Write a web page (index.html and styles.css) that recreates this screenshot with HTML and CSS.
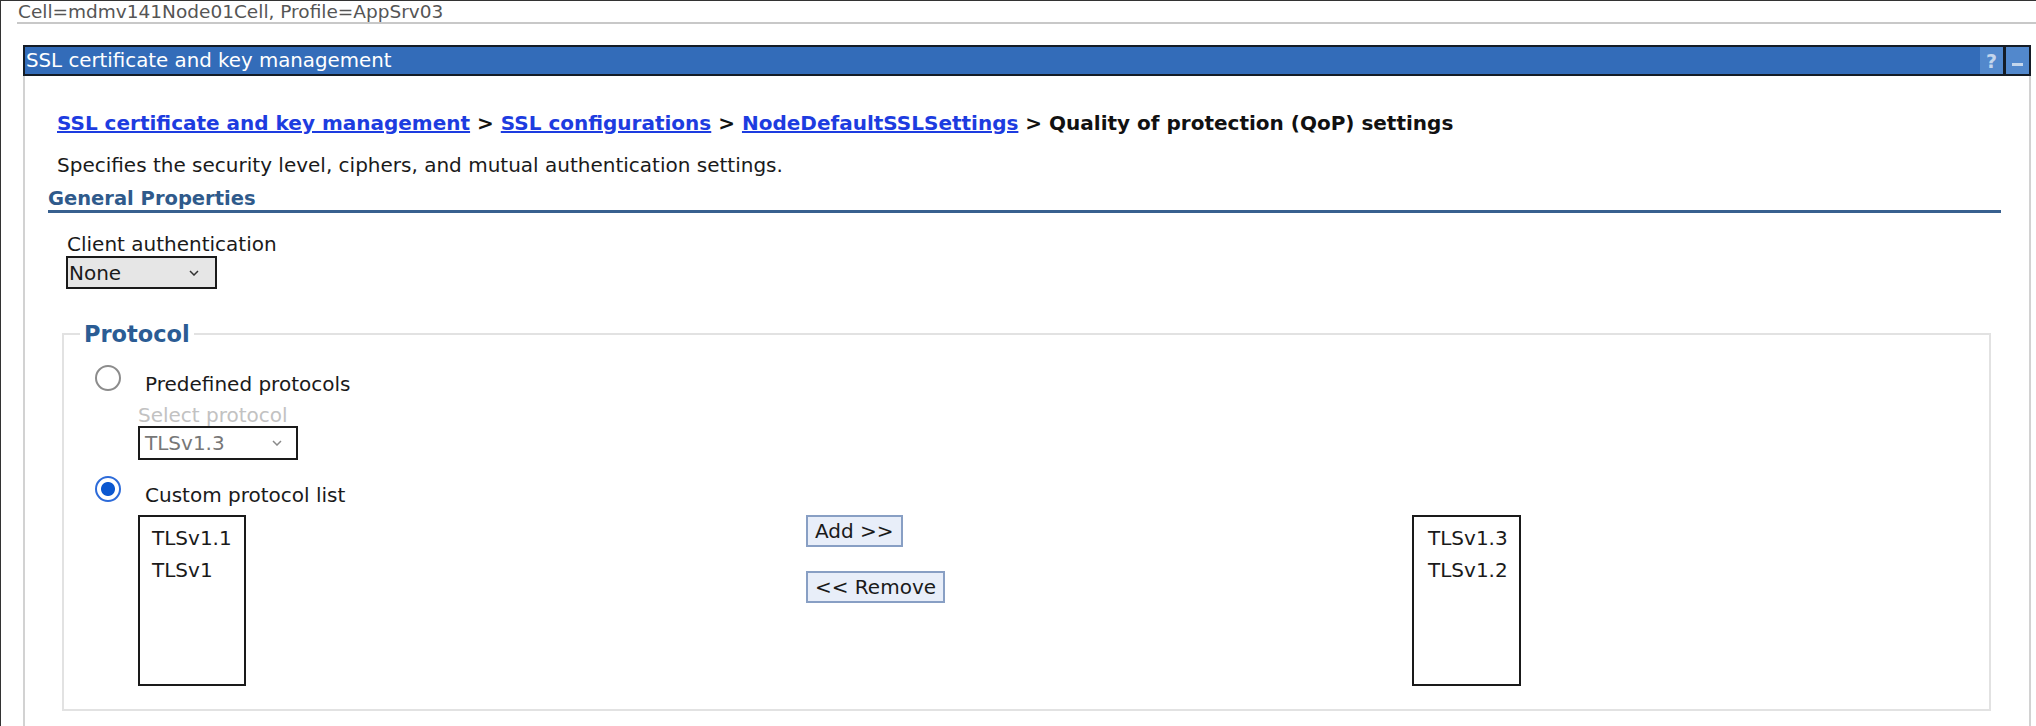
FILE: index.html
```html
<!DOCTYPE html>
<html lang="en">
<head>
    <meta charset="UTF-8">
    <title>Quality of protection (QoP) settings</title>
    <link rel="stylesheet" href="styles.css">
</head>
<body>
    <div class="frame">
        <div class="context">Cell=mdmv141Node01Cell, Profile=AppSrv03</div>

        <div class="portlet">
            <div class="portlet-title">
                <span class="portlet-name">SSL certificate and key management</span>
                <span class="tools">
                    <span class="tool">?</span>
                    <span class="tool tool-min"><span class="min-bar"></span></span>
                </span>
            </div>

            <div class="portlet-body">
                <h1 class="crumbs">
                    <a href="#">SSL certificate and key management</a> &gt;
                    <a href="#">SSL configurations</a> &gt;
                    <a href="#">NodeDefaultSSLSettings</a> &gt;
                    Quality of protection (QoP) settings
                </h1>
                <p class="desc">Specifies the security level, ciphers, and mutual authentication settings.</p>

                <h2 class="section">General Properties</h2>

                <div class="field">
                    <label class="field-label">Client authentication</label>
                    <div class="select select-auth">
                        <span>None</span>
                        <svg class="chev" width="10" height="6" viewBox="0 0 10 6"><path d="M1 1 L5 5 L9 1" fill="none" stroke="#333" stroke-width="1.5"/></svg>
                    </div>
                </div>

                <fieldset class="protocol">
                    <legend>Protocol</legend>

                    <div class="radio-row">
                        <span class="radio"></span>
                        <span class="radio-label">Predefined protocols</span>
                    </div>
                    <div class="sub">
                        <div class="sub-label">Select protocol</div>
                        <div class="select select-proto">
                            <span>TLSv1.3</span>
                            <svg class="chev" width="10" height="6" viewBox="0 0 10 6"><path d="M1 1 L5 5 L9 1" fill="none" stroke="#8a8a8a" stroke-width="1.5"/></svg>
                        </div>
                    </div>

                    <div class="radio-row radio-row-2">
                        <span class="radio checked"></span>
                        <span class="radio-label">Custom protocol list</span>
                    </div>

                    <div class="lists">
                        <div class="listbox">
                            <div class="option">TLSv1.1</div>
                            <div class="option">TLSv1</div>
                        </div>
                        <div class="movers">
                            <button class="btn">Add &gt;&gt;</button>
                            <button class="btn">&lt;&lt; Remove</button>
                        </div>
                        <div class="listbox listbox-right">
                            <div class="option">TLSv1.3</div>
                            <div class="option">TLSv1.2</div>
                        </div>
                    </div>
                </fieldset>
            </div>
        </div>
    </div>
</body>
</html>
```

FILE: styles.css
```css
* {
    box-sizing: border-box;
    margin: 0;
    padding: 0;
}

html, body {
    height: 100%;
}

body {
    font-family: "DejaVu Sans", Verdana, sans-serif;
    font-size: 20px;
    color: #1a1a1a;
    background: #ffffff;
    overflow: hidden;
}

.frame {
    height: 100%;
    display: flex;
    flex-direction: column;
    border-left: 1px solid #333;
    border-top: 1px solid #333;
}

.context {
    margin-left: 16px;
    height: 23px;
    padding: 1px 0 0 1px;
    line-height: 20px;
    font-size: 18.5px;
    color: #555;
    border-bottom: 2px solid #c8c8c8;
}

.portlet {
    flex: 1;
    display: flex;
    flex-direction: column;
    margin: 21px 5px 0 22px;
}

/* title bar */
.portlet-title {
    display: flex;
    align-items: stretch;
    justify-content: space-between;
    height: 31px;
    background: #336cb9;
    border: 2px solid #141c26;
    color: #ffffff;
    font-size: 19.8px;
}

.portlet-name {
    padding-left: 1px;
    line-height: 27px;
}

.tools {
    display: flex;
}

.tool {
    width: 23px;
    display: flex;
    align-items: center;
    justify-content: center;
    background: #5288cc;
    color: #c4d6ec;
    font-size: 19px;
    font-weight: bold;
}

.tool-min {
    border-left: 3px solid #141c26;
    width: 26px;
    align-items: flex-end;
    padding-bottom: 8px;
}

.min-bar {
    width: 11px;
    height: 3px;
    background: #c4d6ec;
}

.portlet-body {
    flex: 1;
    border-left: 2px solid #d2d2d2;
    border-right: 2px solid #d2d2d2;
    padding: 35px 28px 0 23px;
}

.crumbs {
    margin-left: 9px;
    font-size: 20px;
    font-weight: bold;
    line-height: 24px;
    color: #111;
}

.crumbs a {
    color: #1d3ce0;
    text-decoration: underline;
}

.desc {
    margin: 18px 0 0 9px;
    line-height: 24px;
}

.section {
    margin-top: 10px;
    font-size: 19.5px;
    font-weight: bold;
    color: #2f5a8b;
    line-height: 23px;
    border-bottom: 3px solid #38608f;
}

.field {
    margin: 19px 0 0 19px;
}

.field-label {
    display: block;
    line-height: 24px;
}

.select {
    display: flex;
    align-items: center;
    justify-content: space-between;
    border: 2px solid #1a1a1a;
}

.select-auth {
    width: 151px;
    height: 33px;
    margin-left: -1px;
    padding: 0 16px 0 1px;
    background: #e6e6e6;
}

.select-proto {
    width: 160px;
    height: 34px;
    padding: 0 14px 0 5px;
    background: #ffffff;
    color: #777;
}

/* protocol group */
.protocol {
    margin: 32px 10px 0 14px;
    height: 390px;
    border: 2px solid #e2e2e2;
}

.protocol legend {
    margin-left: 16px;
    padding: 0 4px;
    font-size: 22.5px;
    font-weight: bold;
    color: #2b5c94;
    line-height: 26px;
}

.radio-row {
    display: flex;
    align-items: flex-start;
    margin: 18px 0 0 31px;
}

.radio {
    width: 26px;
    height: 26px;
    flex-shrink: 0;
    border-radius: 50%;
    border: 2px solid #8c8c8c;
    margin-right: 24px;
    background: #fff;
}

.radio.checked {
    border: 2.5px solid #2d6bd9;
    background: radial-gradient(circle, #0b57d0 0 6.5px, #ffffff 7.5px);
}

.radio-label {
    margin-top: 7px;
    line-height: 24px;
}

.sub {
    margin: 8px 0 0 74px;
}

.sub-label {
    color: #c2c2c2;
    line-height: 22px;
}

.radio-row-2 {
    margin-top: 16px;
}

.lists {
    display: grid;
    grid-template-columns: 668px 606px 109px;
    margin: 8px 0 0 74px;
}

.listbox {
    width: 108px;
    height: 171px;
    border: 2px solid #1a1a1a;
    padding: 5px 0 0 12px;
}

.listbox-right {
    width: 109px;
    padding-left: 14px;
}

.option {
    line-height: 32px;
}

.movers {
    display: flex;
    flex-direction: column;
    align-items: flex-start;
    gap: 24px;
}

.btn {
    font-family: inherit;
    font-size: 20px;
    color: #1a1a1a;
    height: 32px;
    padding: 0 7px;
    white-space: nowrap;
    background: #e8eef9;
    border: 2px solid #889fc4;
    cursor: pointer;
}
```
